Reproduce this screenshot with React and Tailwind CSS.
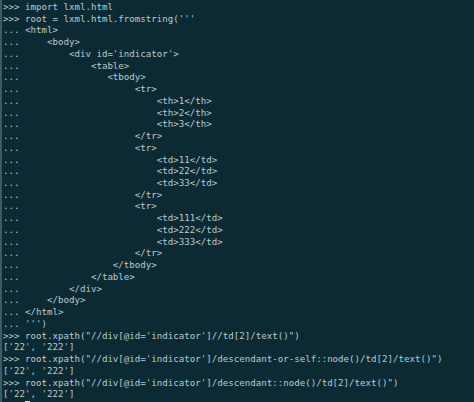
const lines = [
  ">>> import lxml.html",
  ">>> root = lxml.html.fromstring('''",
  "... <html>",
  "...     <body>",
  "...         <div id='indicator'>",
  "...             <table>",
  "...                <tbody>",
  "...                     <tr>",
  "...                         <th>1</th>",
  "...                         <th>2</th>",
  "...                         <th>3</th>",
  "...                     </tr>",
  "...                     <tr>",
  "...                         <td>11</td>",
  "...                         <td>22</td>",
  "...                         <td>33</td>",
  "...                     </tr>",
  "...                     <tr>",
  "...                         <td>111</td>",
  "...                         <td>222</td>",
  "...                         <td>333</td>",
  "...                     </tr>",
  "...                 </tbody>",
  "...             </table>",
  "...         </div>",
  "...     </body>",
  "... </html>",
  "... ''')",
  ">>> root.xpath(\"//div[@id='indicator']//td[2]/text()\")",
  "['22', '222']",
  ">>> root.xpath(\"//div[@id='indicator']/descendant-or-self::node()/td[2]/text()\")",
  "['22', '222']",
  ">>> root.xpath(\"//div[@id='indicator']/descendant::node()/td[2]/text()\")",
  "['22', '222']",
];

export default function App() {
  return (
    <div className="h-[402px] w-[474px] overflow-hidden bg-[#0b2a34] flex">
      {/* window edge */}
      <div className="w-[2px] bg-[#3d5a63]" />
      <div className="flex-1 pl-[1px] pt-[2px] font-['DejaVu_Sans_Mono',monospace] text-[9.15px] leading-[11.73px] text-[#bccacd] whitespace-pre">
        {lines.map((l, i) => (
          <div key={i}>{l}</div>
        ))}
        <div className="flex">
          <span className="invisible">{">>> "}</span>
          <span className="inline-block w-[5.5px] h-[11.73px] bg-[#dfe6e8]" />
        </div>
      </div>
    </div>
  );
}
